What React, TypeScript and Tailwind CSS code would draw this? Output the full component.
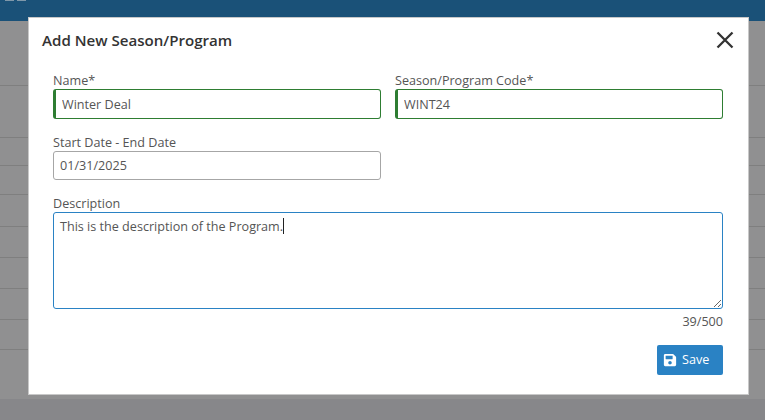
const rowHeights = ["h-[65px]", "h-[52px]", "h-[28px]", "h-[29px]", "h-[32px]", "h-[31px]", "h-[31px]", "h-[31px]", "h-[30px]"];

function Field({ label, value, valid }: { label: string; value: string; valid?: boolean }) {
  return (
    <div className="w-[328px]">
      <label className="block h-[18px] text-[12.6px] leading-[20px] text-[#555]">{label}</label>
      <input
        readOnly
        value={value}
        className={
          valid
            ? "block w-full h-[30px] rounded-[3px] border border-l-[3px] border-[#2e7d32] bg-white pl-[6px] text-[12.6px] text-[#555] outline-none"
            : "block w-full h-[29px] rounded-[3px] border border-[#a6a6a6] bg-white pl-[6px] text-[12.6px] text-[#555] outline-none"
        }
      />
    </div>
  );
}

export default function App() {
  return (
    <div className="relative w-[765px] h-[420px] overflow-hidden bg-[#87878a] font-['Open_Sans',sans-serif]">
      <div className="relative h-[21px] bg-[#1a5178]">
        <div className="flex gap-[3px] pl-[5px]">
          <span className="h-[1px] w-[9px] bg-[#7f98aa]" />
          <span className="h-[1px] w-[9px] bg-[#7f98aa]" />
        </div>
      </div>
      {rowHeights.map((h, i) => (
        <div key={i} className={`${h} border-b border-[#7f7f7f] bg-[#909091]`} />
      ))}
      <div className="h-[49px] bg-[#909091]" />

      <div className="absolute left-[28px] top-[17px] w-[721px] h-[378px] bg-white shadow-[inset_0_0_0_1px_#c8c8c8]">
        <div className="flex items-start justify-between pl-[14px] pr-[15px] pt-[13px]">
          <h2 className="text-[15.1px] leading-[20px] font-semibold text-[#333]">Add New Season/Program</h2>
          <svg width="18" height="18" viewBox="0 0 18 18" className="text-[#333] mt-[1px]">
            <path d="M1.5 1.5 L16.5 16.5 M16.5 1.5 L1.5 16.5" stroke="currentColor" strokeWidth="2.3" fill="none" />
          </svg>
        </div>

        <div className="pl-[25px] pr-[26px] pt-[21px]">
          <div className="flex gap-[14px]">
            <Field label="Name*" value="Winter Deal" valid />
            <Field label="Season/Program Code*" value="WINT24" valid />
          </div>
          <div className="mt-[14px]">
            <Field label="Start Date - End Date" value="01/31/2025" />
          </div>
          <div className="relative mt-[14px]">
            <label className="block h-[18px] text-[12.6px] leading-[20px] text-[#555]">Description</label>
            <textarea
              readOnly
              value="This is the description of the Program."
              className="block w-full h-[97px] rounded-[3px] border border-[#2a82c4] bg-white px-[6px] py-[5px] text-[12.6px] leading-[18px] text-[#555] outline-none resize-y"
            />
            <span className="absolute left-[230px] top-[24px] h-[16px] w-[1px] bg-[#222]" />
          </div>
          <div className="mt-[4px] text-right text-[12.6px] leading-[17px] text-[#555]">39/500</div>
          <div className="mt-[15px] flex justify-end">
            <button className="flex h-[30px] w-[66px] items-center rounded-[2px] bg-[#2a82c4] pl-[6px] text-[12.6px] text-white">
              <svg width="14" height="14" viewBox="0 0 448 512" fill="currentColor" className="mr-[5px]">
                <path d="M433.9 129.9l-83.9-83.9A48 48 0 0 0 316.1 32H48C21.5 32 0 53.5 0 80v352c0 26.5 21.5 48 48 48h352c26.5 0 48-21.5 48-48V163.9a48 48 0 0 0-14.1-34zM224 416c-35.3 0-64-28.7-64-64s28.7-64 64-64 64 28.7 64 64-28.7 64-64 64zm96-304.5V212c0 6.6-5.4 12-12 12H76c-6.6 0-12-5.4-12-12V108c0-6.6 5.4-12 12-12h228.5c3.2 0 6.2 1.3 8.5 3.5l3.5 3.5c2.3 2.3 3.5 5.3 3.5 8.5z" />
              </svg>
              Save
            </button>
          </div>
        </div>
      </div>
    </div>
  );
}
